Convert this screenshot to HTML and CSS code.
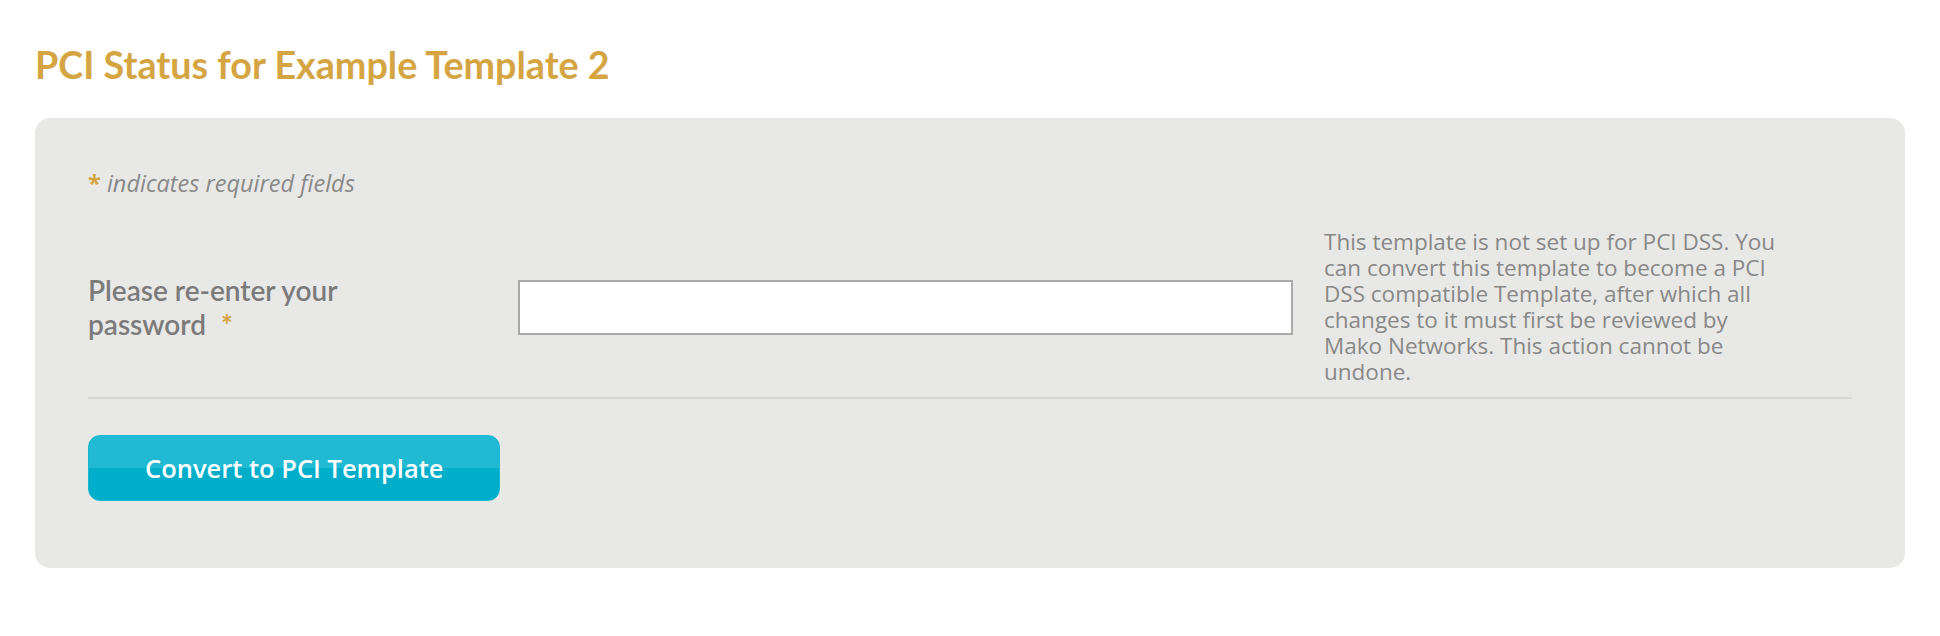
FILE: index.html
```html
<!DOCTYPE html>
<html lang="en">
<head>
<meta charset="utf-8">
<title>PCI Status for Example Template 2</title>
<link rel="stylesheet" href="styles.css">
</head>
<body>
  <main class="page">
    <h1 class="page-title">PCI Status for Example Template 2</h1>
    <section class="panel">
      <p class="required-note"><span class="req">*</span> <em>indicates required fields</em></p>
      <div class="form-row">
        <label class="field-label" for="pw">Please re-enter your password <span class="req req-label">*</span></label>
        <div class="field-input">
          <input id="pw" type="password" class="text-input">
        </div>
        <p class="field-help">This template is not set up for PCI DSS. You can convert this template to become a PCI DSS compatible Template, after which all changes to it must first be reviewed by Mako Networks. This action cannot be undone.</p>
      </div>
      <div class="actions">
        <button type="button" class="btn-primary">Convert to PCI Template</button>
      </div>
    </section>
  </main>
</body>
</html>
```
FILE: styles.css
```css
html, body {
  margin: 0;
  padding: 0;
  background: #ffffff;
}

.page {
  padding: 42px 35px 0;
  font-family: "Open Sans", "Liberation Sans", sans-serif;
}

.page-title {
  margin: 0 0 30px;
  font-family: Lato, "Liberation Sans", sans-serif;
  font-weight: 700;
  font-size: 37.7px;
  line-height: 46px;
  color: #d5a543;
}

.panel {
  background: #e8e8e6;
  border-radius: 15px;
  padding: 50px 53px 67px;
}

.req {
  color: #d5a543;
  font-style: normal;
  font-weight: 700;
}

.required-note {
  margin: 0 0 31px;
  font-size: 23.5px;
  line-height: 30px;
  color: #898989;
}

.required-note em {
  font-style: italic;
}

.form-row {
  display: grid;
  grid-template-columns: 430px 775px 1fr;
  align-items: center;
  padding-bottom: 12px;
  border-bottom: 2px solid #d7d7d5;
}

.field-label {
  font-family: Lato, "Liberation Sans", sans-serif;
  font-weight: 600;
  font-size: 28px;
  line-height: 34px;
  color: #7b7b7b;
  padding-right: 150px;
}

.req-label {
  margin-left: 8px;
}

.text-input {
  display: block;
  box-sizing: border-box;
  width: 775px;
  height: 55px;
  margin: 0;
  border: 2px solid #aaaaaa;
  border-radius: 0;
  background: #ffffff;
  font-size: 20px;
}

.field-help {
  margin: 0 0 0 31px;
  max-width: 460px;
  font-size: 22.5px;
  line-height: 26px;
  color: #888888;
}

.actions {
  padding-top: 36px;
}

.btn-primary {
  display: inline-block;
  margin: 0;
  padding: 17px 56px;
  border: 1px solid #19b7d0;
  border-radius: 12px;
  background: linear-gradient(to bottom, #21bad2 0%, #21bad2 50%, #00aec9 50%, #00aec9 100%);
  color: #ffffff;
  font-family: "Open Sans", "Liberation Sans", sans-serif;
  font-weight: 600;
  font-size: 25.5px;
  line-height: 30px;
  cursor: pointer;
}
```
